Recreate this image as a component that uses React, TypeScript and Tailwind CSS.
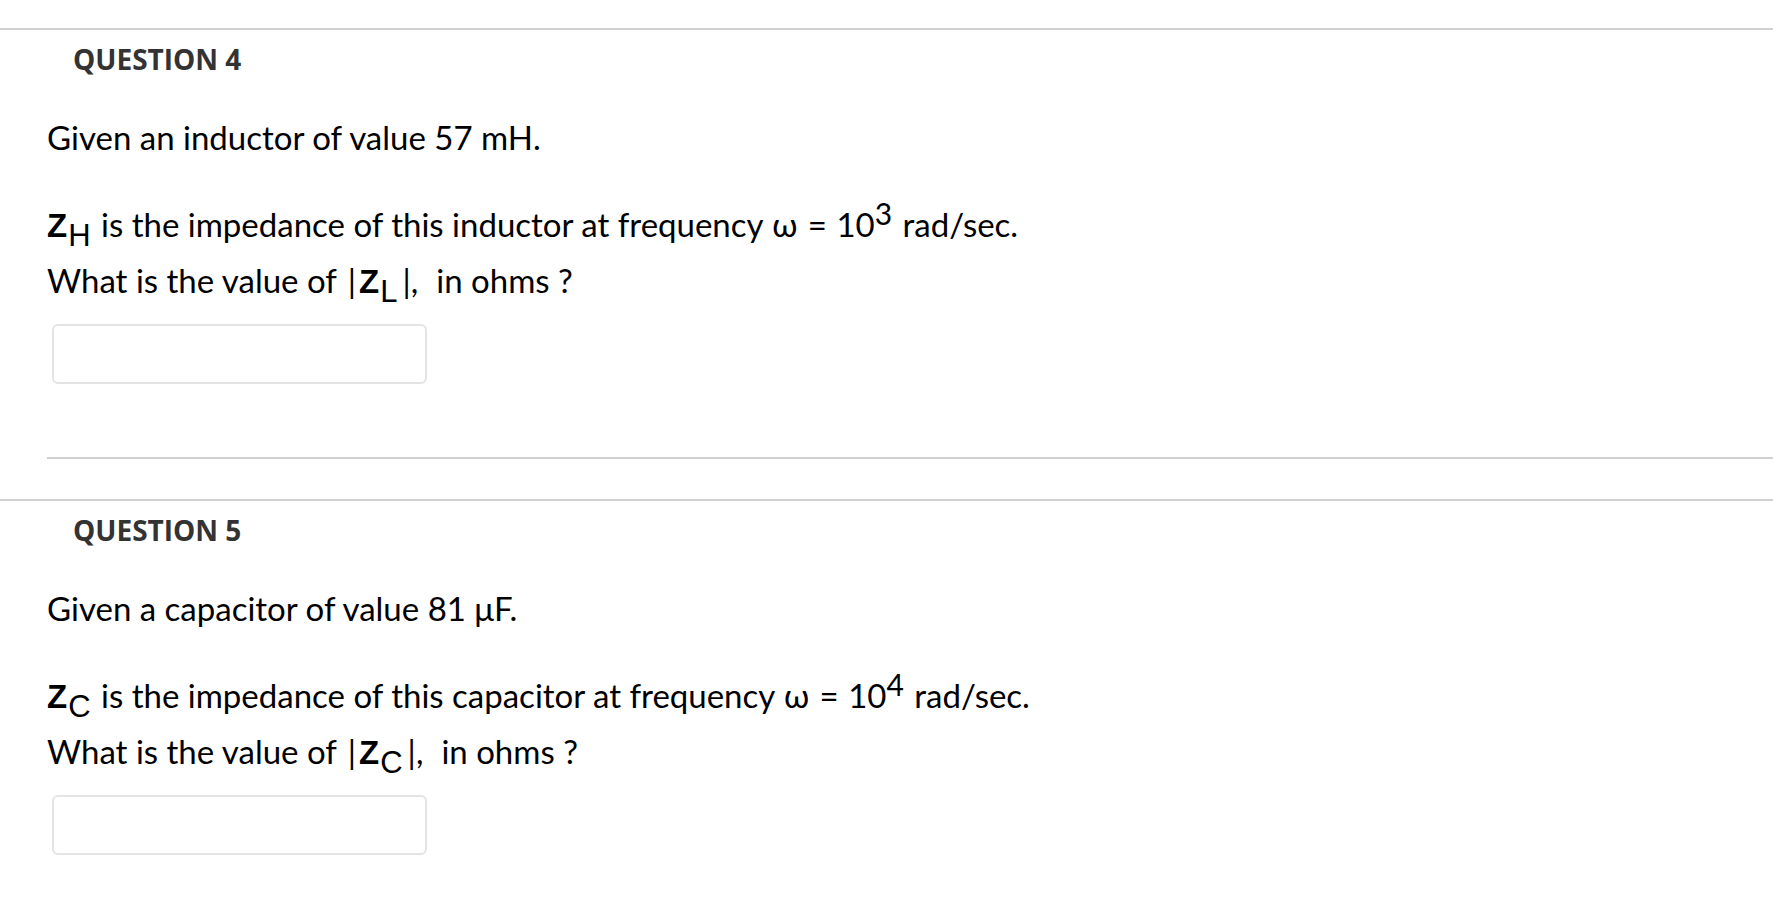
import React from "react";

const bodyText = "font-['Lato','Noto_Sans',sans-serif] text-[33px] leading-[40px] text-black";

function Z({ sub }: { sub: string }) {
  return (
    <span className="font-['Liberation_Sans',Arial,sans-serif]">
      <span className="font-bold text-[33px]">Z</span>
      <span className="relative top-[9px] ml-[1px] text-[31px]">{sub}</span>
    </span>
  );
}

function Question({
  n,
  given,
  sub,
  absSub,
  element,
  exp,
}: {
  n: number;
  given: string;
  sub: string;
  absSub: string;
  element: string;
  exp: string;
}) {
  return (
    <section className="border-t-2 border-[#d0d0d0]">
      <h2 className="mt-[11px] pl-[73px] font-['Open_Sans',sans-serif] text-[28px] leading-[36px] font-bold text-[#333333]">
        QUESTION {n}
      </h2>
      <div className="pl-[47px]">
        <p className={`mt-[40px] ${bodyText}`}>{given}</p>
        <p className={`mt-[47px] ${bodyText}`}>
          <Z sub={sub} />{" "}
          <span className="ml-[2px]">is the impedance of this {element} at frequency</span>{" "}
          <span className="ml-[1px]">ω</span> <span className="ml-[2px]">=</span>{" "}
          <span className="ml-[1px]">10</span>
          <span className="relative -top-[12px] text-[30px]">{exp}</span>{" "}
          <span className="ml-[2px]">rad/sec.</span>
        </p>
        <p className={`mt-[13px] ${bodyText}`}>
          What is the value of <span className="mx-[3px]">|</span>
          <Z sub={absSub} />
          <span className="ml-[5px]">|</span>,<span className="ml-[18px]">in ohms ?</span>
        </p>
        <div className="mt-[21px] ml-[5px] h-[60px] w-[375px] rounded-[6px] border-2 border-[#e4e4e4] bg-white" />
        <div className="mt-[73px] h-[2px] w-full bg-[#d0d0d0]" />
        <div className="h-[40px]" />
      </div>
    </section>
  );
}

export default function App() {
  return (
    <div className="min-h-screen w-full overflow-hidden bg-white">
      <div className="h-[28px]" />
      <Question n={4} given="Given an inductor of value 57 mH." sub="H" absSub="L" element="inductor" exp="3" />
      <Question n={5} given="Given a capacitor of value 81 μF." sub="C" absSub="C" element="capacitor" exp="4" />
    </div>
  );
}
